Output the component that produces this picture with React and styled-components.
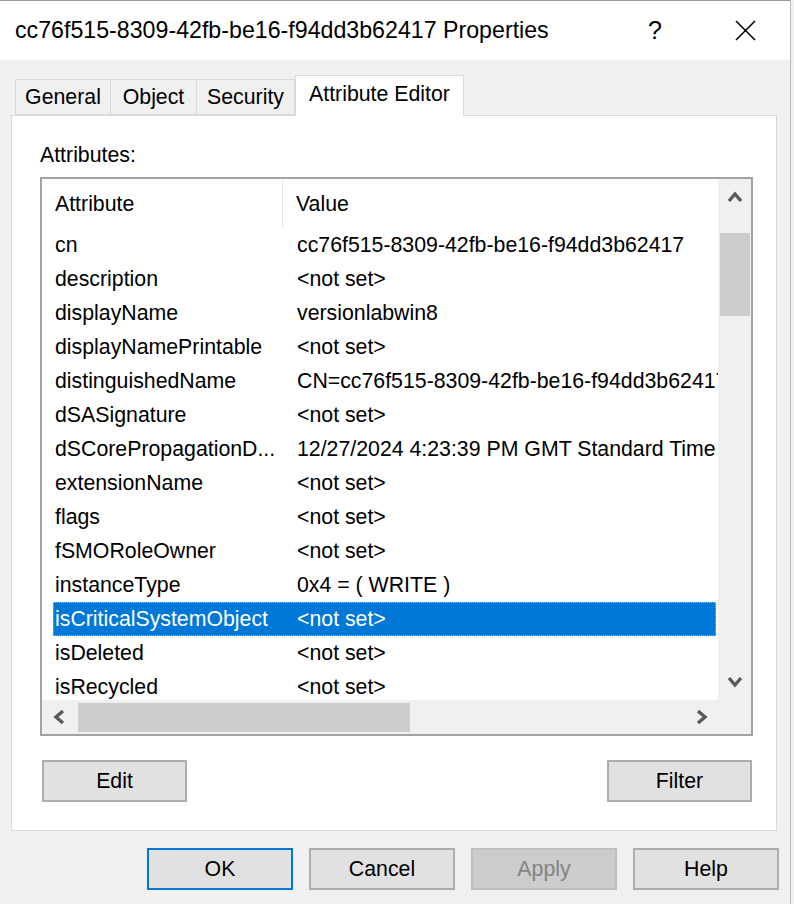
import React from 'react';
import styled, { createGlobalStyle } from 'styled-components';

const GlobalStyle = createGlobalStyle`
  * { box-sizing: border-box; }
  html, body {
    margin: 0;
    padding: 0;
    background: #f0f0f0;
  }
  body {
    font-family: "Liberation Sans", Arial, sans-serif;
    font-size: 21.3px;
    color: #000;
  }
`;

const Window = styled.div`
  width: 791px;
  height: 904px;
  background: #f0f0f0;
  border-top: 1px solid #9a9a9a;
  border-right: 1px solid #b9b9b9;
  display: flex;
  flex-direction: column;
`;

const TitleBar = styled.div`
  height: 59px;
  background: #fff;
  display: flex;
  align-items: center;
  padding-left: 15px;
`;

const Title = styled.div`
  flex: 1;
  font-size: 23.2px;
  white-space: nowrap;
`;

const CaptionButton = styled.div`
  width: 90px;
  height: 100%;
  display: flex;
  align-items: center;
  justify-content: center;
  font-size: 25px;
`;

const Body = styled.div`
  flex: 1;
  padding: 15px 11px 0 11px;
  display: flex;
  flex-direction: column;
`;

const TabStrip = styled.div`
  display: flex;
  align-items: flex-end;
  padding-left: 4px;
  height: 40px;
`;

const Tab = styled.div`
  width: ${({ w }) => w}px;
  height: ${({ active }) => (active ? 41 : 36)}px;
  margin-bottom: ${({ active }) => (active ? -1 : 0)}px;
  background: ${({ active }) => (active ? '#fff' : '#f0f0f0')};
  border: 1px solid #d9d9d9;
  border-bottom: ${({ active }) => (active ? 'none' : '1px solid #d9d9d9')};
  border-left: ${({ first, active }) => (first || active ? '1px solid #d9d9d9' : 'none')};
  display: flex;
  align-items: center;
  justify-content: center;
  padding-bottom: ${({ active }) => (active ? 4 : 0)}px;
  position: relative;
  z-index: ${({ active }) => (active ? 1 : 0)};
`;

const Panel = styled.div`
  width: 766px;
  height: 716px;
  background: #fff;
  border: 1px solid #d9d9d9;
  padding: 26px 23px 0 28px;
`;

const Label = styled.div`
  line-height: 26px;
  height: 26px;
`;

const ListBox = styled.div`
  margin-top: 9px;
  width: 713px;
  height: 559px;
  border: 2px solid #a3a3a3;
  display: grid;
  grid-template-columns: 1fr 33px;
  grid-template-rows: 1fr 34px;
  background: #f0f0f0;
`;

const Viewport = styled.div`
  background: #fff;
  overflow: hidden;
  border-bottom-right-radius: 2px;
`;

const HeaderRow = styled.div`
  display: flex;
  height: 49px;
  margin-left: 11px;
`;

const HeaderCell = styled.div`
  width: ${({ w }) => (w ? `${w}px` : 'auto')};
  padding-left: ${({ pad }) => pad}px;
  display: flex;
  align-items: center;
  border-right: ${({ divider }) => (divider ? '1px solid #e5e5e5' : 'none')};
  margin-top: 1px;
`;

const Row = styled.div`
  display: flex;
  width: 663px;
  height: 34px;
  line-height: 34px;
  margin-left: 11px;
  white-space: nowrap;
  background: ${({ selected }) => (selected ? '#0078d7' : 'transparent')};
  color: ${({ selected }) => (selected ? '#fff' : '#000')};
  outline: ${({ selected }) => (selected ? '1px dotted #f0a840' : 'none')};
  outline-offset: -1px;
`;

const NameCell = styled.div`
  width: 230px;
  flex-shrink: 0;
  padding-left: 2px;
  overflow: hidden;
`;

const ValueCell = styled.div`
  padding-left: 14px;
  flex-shrink: 0;
`;

const VScroll = styled.div`
  display: flex;
  flex-direction: column;
  align-items: center;
`;

const HScroll = styled.div`
  display: flex;
  align-items: center;
`;

const ArrowButton = styled.div`
  width: ${({ horizontal }) => (horizontal ? 34 : 33)}px;
  height: ${({ horizontal }) => (horizontal ? 34 : 37)}px;
  display: flex;
  align-items: center;
  justify-content: center;
  flex-shrink: 0;
`;

const VThumb = styled.div`
  width: 30px;
  height: 83px;
  margin-top: 17px;
  background: #cdcdcd;
`;

const HThumb = styled.div`
  width: 332px;
  height: 29px;
  margin-left: 2px;
  margin-top: 1px;
  background: #cdcdcd;
`;

const Spacer = styled.div`
  flex: 1;
`;

const Corner = styled.div`
  background: #f0f0f0;
`;

const PanelButtons = styled.div`
  margin-top: 24px;
  width: 713px;
  padding: 0 1px 0 2px;
  display: flex;
  justify-content: space-between;
`;

const Button = styled.div`
  width: ${({ w }) => w || 145}px;
  height: 42px;
  display: flex;
  align-items: center;
  justify-content: center;
  background: ${({ disabled }) => (disabled ? '#cccccc' : '#e1e1e1')};
  color: ${({ disabled }) => (disabled ? '#838383' : '#000')};
  border: 2px solid
    ${({ primary, disabled }) => (primary ? '#0078d7' : disabled ? '#bfbfbf' : '#adadad')};
`;

const DialogButtons = styled.div`
  margin-top: 17px;
  display: flex;
  justify-content: flex-end;
  gap: 16px;
`;

const Chevron = ({ dir }) => {
  const pts = {
    up: '2,10 8,3 14,10',
    down: '2,3 8,10 14,3',
    left: '10,2 3,8 10,14',
    right: '3,2 10,8 3,14',
  }[dir];
  const vertical = dir === 'up' || dir === 'down';
  return (
    <svg width={vertical ? 16 : 13} height={vertical ? 13 : 16} viewBox={vertical ? '0 0 16 13' : '0 0 13 16'}>
      <polyline points={pts} fill="none" stroke="#5a5a5a" strokeWidth="3.4" />
    </svg>
  );
};

const CloseIcon = () => (
  <svg width="21" height="21" viewBox="0 0 21 21">
    <line x1="1" y1="1" x2="20" y2="20" stroke="#000" strokeWidth="1.6" />
    <line x1="20" y1="1" x2="1" y2="20" stroke="#000" strokeWidth="1.6" />
  </svg>
);

const attributes = [
  ['cn', 'cc76f515-8309-42fb-be16-f94dd3b62417'],
  ['description', '<not set>'],
  ['displayName', 'versionlabwin8'],
  ['displayNamePrintable', '<not set>'],
  ['distinguishedName', 'CN=cc76f515-8309-42fb-be16-f94dd3b62417'],
  ['dSASignature', '<not set>'],
  ['dSCorePropagationD...', '12/27/2024 4:23:39 PM GMT Standard Time'],
  ['extensionName', '<not set>'],
  ['flags', '<not set>'],
  ['fSMORoleOwner', '<not set>'],
  ['instanceType', '0x4 = ( WRITE )'],
  ['isCriticalSystemObject', '<not set>'],
  ['isDeleted', '<not set>'],
  ['isRecycled', '<not set>'],
];

const tabs = [
  { label: 'General', w: 96 },
  { label: 'Object', w: 86 },
  { label: 'Security', w: 98 },
  { label: 'Attribute Editor', w: 169, active: true },
];

export default function App() {
  return (
    <>
      <GlobalStyle />
      <Window>
        <TitleBar>
          <Title>cc76f515-8309-42fb-be16-f94dd3b62417 Properties</Title>
          <CaptionButton>?</CaptionButton>
          <CaptionButton>
            <CloseIcon />
          </CaptionButton>
        </TitleBar>
        <Body>
          <TabStrip>
            {tabs.map((t, i) => (
              <Tab key={t.label} w={t.w} active={t.active} first={i === 0}>
                {t.label}
              </Tab>
            ))}
          </TabStrip>
          <Panel>
            <Label>Attributes:</Label>
            <ListBox>
              <Viewport>
                <HeaderRow>
                  <HeaderCell w={230} pad={2} divider>
                    Attribute
                  </HeaderCell>
                  <HeaderCell pad={13}>Value</HeaderCell>
                </HeaderRow>
                {attributes.map(([name, value]) => (
                  <Row key={name} selected={name === 'isCriticalSystemObject'}>
                    <NameCell>{name}</NameCell>
                    <ValueCell>{value}</ValueCell>
                  </Row>
                ))}
              </Viewport>
              <VScroll>
                <ArrowButton>
                  <Chevron dir="up" />
                </ArrowButton>
                <VThumb />
                <Spacer />
                <ArrowButton>
                  <Chevron dir="down" />
                </ArrowButton>
              </VScroll>
              <HScroll>
                <ArrowButton horizontal>
                  <Chevron dir="left" />
                </ArrowButton>
                <HThumb />
                <Spacer />
                <ArrowButton horizontal>
                  <Chevron dir="right" />
                </ArrowButton>
              </HScroll>
              <Corner />
            </ListBox>
            <PanelButtons>
              <Button>Edit</Button>
              <Button>Filter</Button>
            </PanelButtons>
          </Panel>
          <DialogButtons>
            <Button w={146} primary>OK</Button>
            <Button w={146}>Cancel</Button>
            <Button w={146} disabled>Apply</Button>
            <Button w={146}>Help</Button>
          </DialogButtons>
        </Body>
      </Window>
    </>
  );
}
